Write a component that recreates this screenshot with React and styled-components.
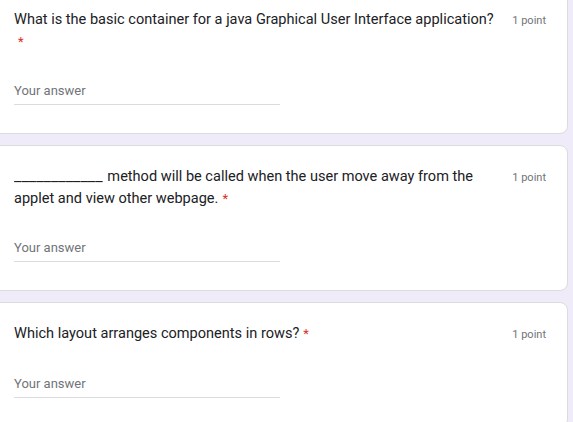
import React from 'react'
import styled, { createGlobalStyle } from 'styled-components'

const Global = createGlobalStyle`
  html, body {
    margin: 0;
    padding: 0;
    background: #f0ebf8;
    overflow: hidden;
  }
`

const Page = styled.div`
  display: flex;
  flex-direction: column;
  gap: 11px;
  margin: -12px 5px 0 -10px;
  font-family: Roboto, "Liberation Sans", sans-serif;
`

const Card = styled.div`
  background: #fff;
  border: 1px solid #dadce0;
  border-radius: 8px;
  padding: 20px 21px 28px 23px;
`

const Head = styled.div`
  display: flex;
  align-items: flex-start;
  gap: 12px;
`

const Question = styled.div`
  flex: 1;
  font-size: 14.55px;
  line-height: 22px;
  color: #202124;
`

const Blank = styled.span`
  display: inline-block;
  transform: scaleX(1.125);
  transform-origin: left center;
  margin-right: 11px;
`

const Req = styled.span`
  color: #d93025;
  font-size: 13px;
  margin-left: 4px;
`

const Points = styled.div`
  flex: none;
  font-size: 11px;
  line-height: 22px;
  color: #70757a;
  padding-top: 1px;
`

const Answer = styled.div`
  margin-top: 30px;
  width: 266px;
  padding-bottom: 5px;
  border-bottom: 1px solid #dadce0;
  font-size: 13px;
  line-height: 16px;
  color: #70757a;
`

const questions = [
  { text: 'What is the basic container for a java Graphical User Interface application?' },
  { blank: '____________', text: ' method will be called when the user move away from the applet and view other webpage.' },
  { text: 'Which layout arranges components in rows?' },
]

export default function App() {
  return (
    <>
      <Global />
      <Page>
        {questions.map((q, i) => (
          <Card key={i}>
            <Head>
              <Question>
                {q.blank && <Blank>{q.blank}</Blank>}
                {q.text}<Req>*</Req>
              </Question>
              <Points>1 point</Points>
            </Head>
            <Answer>Your answer</Answer>
          </Card>
        ))}
      </Page>
    </>
  )
}
